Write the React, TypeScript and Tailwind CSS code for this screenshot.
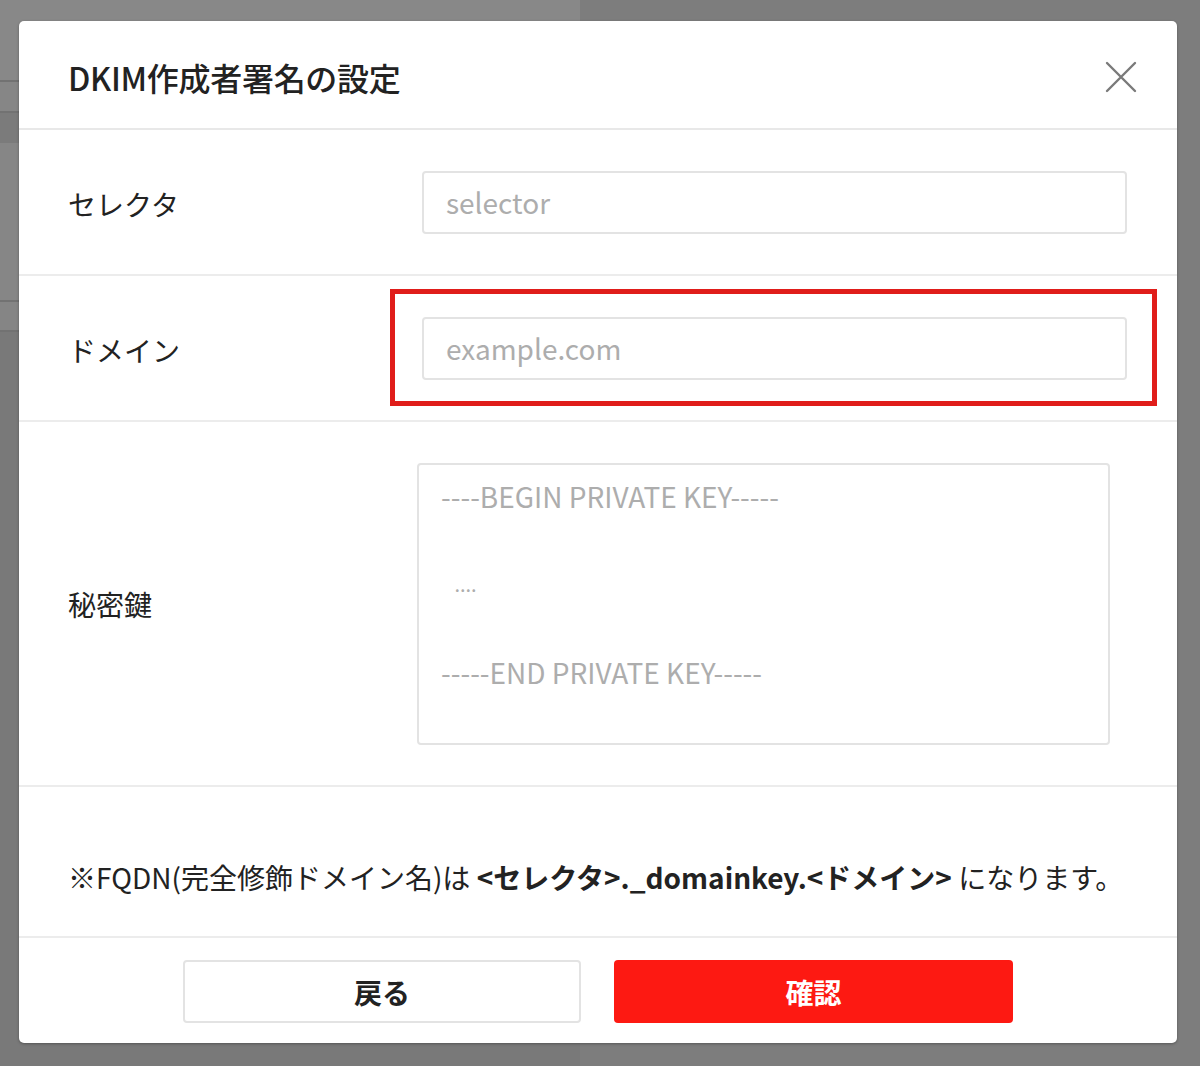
const font = { fontFamily: '"Noto Sans CJK JP", "Noto Sans", sans-serif' };

// the page behind the overlay: a lighter list on the left, plain grey on the right
const Backdrop = () => (
  <div className="absolute inset-0 flex">
    <div className="flex w-[580px] flex-col">
      <div className="h-[80px] bg-[#888888]" />
      <div className="h-[2px] bg-[#727272]" />
      <div className="h-[29px] bg-[#868686]" />
      <div className="h-[2px] bg-[#727272]" />
      <div className="h-[30px] bg-[#7b7b7b]" />
      <div className="h-[157px] bg-[#868686]" />
      <div className="h-[2px] bg-[#727272]" />
      <div className="h-[28px] bg-[#858585]" />
      <div className="h-[2px] bg-[#727272]" />
      <div className="flex-1 bg-[#797979]" />
    </div>
    <div className="flex-1 bg-[#7d7d7d]" />
  </div>
);

const CloseIcon = () => (
  <svg width="32" height="32" viewBox="0 0 32 32" className="text-[#7a7a7a]">
    <path d="M2 2L30 30M30 2L2 30" stroke="currentColor" strokeWidth="2.4" strokeLinecap="round" />
  </svg>
);

const App = () => {
  return (
    <div className="relative h-[1066px] w-[1200px] overflow-hidden" style={font}>
      <Backdrop />

      {/* modal */}
      <div className="absolute left-[19px] top-[21px] flex h-[1022px] w-[1158px] flex-col rounded-[5px] bg-white text-[#222] shadow-[0_1px_3px_rgba(0,0,0,0.3)]">
        {/* header */}
        <div className="flex h-[109px] items-center justify-between border-b-2 border-[#e8e8e8] pl-[49px] pr-[40px] pt-[4px]">
          <h2 className="text-[32px] font-medium tracking-[-0.3px] text-[#222]">
            DKIM作成者署名の設定
          </h2>
          <CloseIcon />
        </div>

        {/* selector */}
        <div className="flex h-[146px] items-center border-b-2 border-[#ececec] pl-[49px] pr-[50px]">
          <div className="w-[354px] pt-[3px] text-[28px]">セレクタ</div>
          <input
            className="h-[63px] flex-1 rounded-[4px] border-2 border-[#e3e3e3] px-[22px] text-[28px] outline-none placeholder:text-[#adadad]"
            placeholder="selector"
          />
        </div>

        {/* domain */}
        <div className="relative flex h-[146px] items-center border-b-2 border-[#ececec] pl-[49px] pr-[50px]">
          <div className="w-[354px] pt-[3px] text-[28px]">ドメイン</div>
          <input
            className="h-[63px] flex-1 rounded-[4px] border-2 border-[#e3e3e3] px-[22px] text-[28px] outline-none placeholder:text-[#adadad]"
            placeholder="example.com"
          />
          <div className="pointer-events-none absolute left-[371px] top-[13px] h-[117px] w-[767px] border-[5px] border-[#e01d1a]" />
        </div>

        {/* private key */}
        <div className="flex h-[365px] items-center border-b-2 border-[#ececec] pl-[49px] pr-[67px]">
          <div className="w-[349px] text-[28px]">秘密鍵</div>
          <div className="flex h-[282px] flex-1 flex-col whitespace-pre rounded-[4px] border-2 border-[#e3e3e3] px-[22px] pt-[9px] text-[28px] leading-[44px] text-[#adadad]">
            <div>----BEGIN PRIVATE KEY-----</div>
            <div>&nbsp;</div>
            <div className="text-[20px]">{"   ...."}</div>
            <div>&nbsp;</div>
            <div>-----END PRIVATE KEY-----</div>
          </div>
        </div>

        {/* note */}
        <div className="flex h-[151px] items-start border-b-2 border-[#ececec] pl-[49px] pt-[70px]">
          <p className="text-[28px] leading-[40px] text-[#222]">
            ※FQDN(完全修飾ドメイン名)は{" "}
            <span className="font-bold">&lt;セレクタ&gt;._domainkey.&lt;ドメイン&gt;</span>{" "}
            になります。
          </p>
        </div>

        {/* footer */}
        <div className="flex flex-1 items-start justify-center gap-[33px] pt-[22px]">
          <button className="h-[63px] w-[398px] rounded-[4px] border-2 border-[#e3e3e3] bg-white text-[28px] font-bold text-[#222]">
            戻る
          </button>
          <button className="h-[63px] w-[399px] rounded-[4px] bg-[#fd1912] text-[28px] font-bold text-white">
            確認
          </button>
        </div>
      </div>
    </div>
  );
};

export default App;
